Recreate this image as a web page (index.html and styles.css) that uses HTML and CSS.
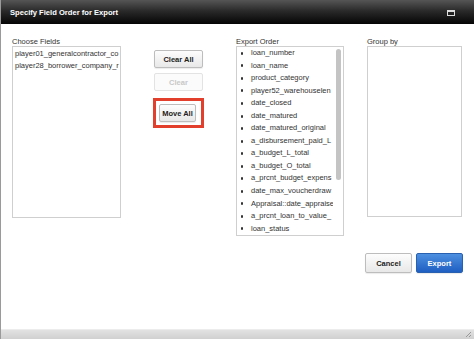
FILE: index.html
```html
<!DOCTYPE html>
<html>
<head>
<meta charset="utf-8">
<link rel="stylesheet" href="styles.css">
</head>
<body>
<div class="win">
  <div class="titlebar">
    <span class="title">Specify Field Order for Export</span>
    <span class="restore"></span>
  </div>
  <div class="content">
    <div class="cols">
      <div class="col c1">
        <div class="label">Choose Fields</div>
        <div class="box b1">
          <div class="item">player01_generalcontractor_co</div>
          <div class="item">player28_borrower_company_r</div>
        </div>
      </div>
      <div class="col c2">
        <button class="btn">Clear All</button>
        <button class="btn disabled">Clear</button>
        <div class="hl"><button class="btn inner">Move All</button></div>
      </div>
      <div class="col c3">
        <div class="label">Export Order</div>
        <div class="box b3">
          <ul class="list">
            <li>loan_number</li>
            <li>loan_name</li>
            <li>product_category</li>
            <li>player52_warehouselen</li>
            <li>date_closed</li>
            <li>date_matured</li>
            <li>date_matured_original</li>
            <li>a_disbursement_paid_L</li>
            <li>a_budget_L_total</li>
            <li>a_budget_O_total</li>
            <li>a_prcnt_budget_expens</li>
            <li>date_max_voucherdraw</li>
            <li>Appraisal::date_appraise</li>
            <li>a_prcnt_loan_to_value_</li>
            <li>loan_status</li>
          </ul>
          <div class="thumb"></div>
        </div>
      </div>
      <div class="col c4">
        <div class="label">Group by</div>
        <div class="box b4"></div>
      </div>
    </div>
    <div class="actions">
      <button class="btn act">Cancel</button>
      <button class="btn act primary">Export</button>
    </div>
  </div>
  <div class="statusbar"><span class="grip"></span></div>
</div>
</body>
</html>
```
FILE: styles.css
```css
* { box-sizing: border-box; }
html, body { margin: 0; padding: 0; background: #fff; }
body {
  font-family: "Liberation Sans", Arial, Helvetica, sans-serif;
  font-size: 7.5px;
  color: #333;
  width: 474px;
  height: 339px;
  overflow: hidden;
}
.win {
  width: 474px;
  height: 339px;
  display: flex;
  flex-direction: column;
  border-left: 1px solid #9a9a9a;
}
.titlebar {
  height: 24px;
  flex: none;
  background: linear-gradient(#555 0%, #2a2a2a 45%, #050505 100%);
  display: flex;
  align-items: center;
  justify-content: space-between;
  padding: 1px 19px 0 9px;
}
.title {
  color: #fff;
  font-weight: bold;
  font-size: 7.6px;
}
.restore {
  width: 8px;
  height: 6px;
  border: 1px solid #ddd;
  border-top-width: 2px;
}
.content {
  flex: 1;
  padding: 13px 0 0 11px;
  display: flex;
  flex-direction: column;
}
.cols {
  display: flex;
  align-items: flex-start;
}
.col { display: flex; flex-direction: column; }
.label {
  height: 9px;
  line-height: 9px;
  color: #333;
}
.box {
  border: 1px solid #cfcfcf;
  background: #fff;
}
.c1 { width: 109px; }
.b1 { height: 172px; padding: 1px 0 0 2px; }
.item { line-height: 12px; white-space: nowrap; overflow: hidden; color: #333; }
.c2 {
  width: 51px;
  margin-left: 32px;
  padding-top: 13px;
  align-items: flex-start;
}
.btn {
  font-family: "Liberation Sans", Arial, Helvetica, sans-serif;
  font-size: 7.5px;
  font-weight: bold;
  color: #222;
  background: linear-gradient(#fdfdfd, #e8e8e8);
  border: 1px solid #bdbdbd;
  border-radius: 2px;
  height: 18px;
  width: 49px;
  padding: 0;
  margin: 0 0 0 1px;
  box-shadow: 0 1px 1px rgba(0,0,0,0.08);
}
.btn.disabled {
  margin-top: 5px;
  color: #c8c8c8;
  background: #fbfbfb;
  border-color: #e3e3e3;
  box-shadow: none;
}
.hl {
  margin-top: 7px;
  width: 51px;
  height: 30px;
  border: 3px solid #e2402c;
  display: flex;
  align-items: center;
  padding-left: 3px;
}
.btn.inner { width: 37px; margin: 0; }
.c3 { width: 108px; margin-left: 32px; }
.b3 {
  height: 190px;
  position: relative;
  overflow: hidden;
}
.list {
  list-style: none;
  margin: 0;
  padding: 0 0 0 4px;
}
.list li {
  height: 12.55px;
  line-height: 12.55px;
  white-space: nowrap;
  overflow: hidden;
  width: 92px;
  display: flex;
  align-items: center;
  color: #333;
}
.list li::before {
  content: "";
  width: 2px;
  height: 3px;
  background: #333;
  border-radius: 1px;
  margin-right: 8px;
  flex: none;
}
.thumb {
  position: absolute;
  right: 2px;
  top: 2px;
  width: 5px;
  height: 131px;
  border-radius: 3px;
  background: #c4c4c4;
}
.c4 { width: 95px; margin-left: 23px; }
.b4 { height: 171px; }
.actions {
  display: flex;
  justify-content: flex-end;
  gap: 4px;
  padding-right: 11px;
  margin-top: 17px;
}
.btn.act {
  width: 47px;
  height: 20px;
  margin: 0;
}
.btn.primary {
  color: #fff;
  background: linear-gradient(#4d8fe0, #1f5fc2);
  border-color: #2a60b0;
}
.statusbar {
  flex: none;
  height: 10px;
  background: linear-gradient(#e2e2e2, #d0d0d0);
  border-top: 1px solid #ececec;
  position: relative;
}
.grip {
  position: absolute;
  right: 3px;
  bottom: 2px;
  width: 6px;
  height: 6px;
  background: linear-gradient(135deg, transparent 50%, #999 50%, #999 60%, transparent 60%, transparent 75%, #999 75%, #999 85%, transparent 85%);
}
```
